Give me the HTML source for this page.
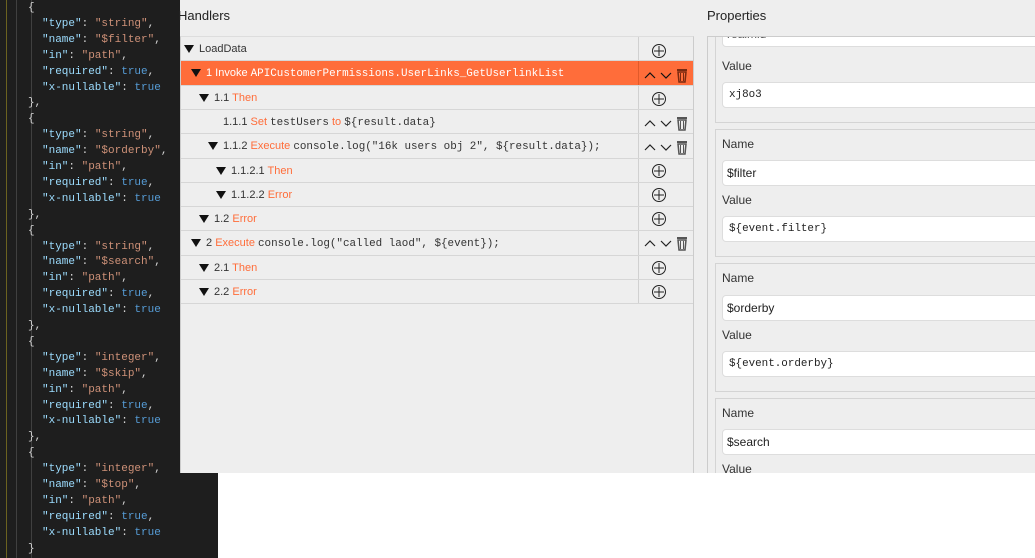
<!DOCTYPE html>
<html><head><style>
*{margin:0;padding:0;box-sizing:border-box}
body{width:1035px;height:558px;overflow:hidden;background:#fff;position:relative;font-family:"Liberation Sans",sans-serif}
#ed{position:absolute;left:0;top:0;width:218px;height:558px;background:#1e1e1e;font-family:"Liberation Mono",monospace;font-size:11px;color:#d4d4d4}
#ed .l{position:absolute;left:0;height:16px;line-height:16px;white-space:pre}
.k{color:#9cdcfe}.s{color:#ce9178}.b{color:#569cd6}
.g{position:absolute;top:0;bottom:0;width:1px;background:#404040}
#main{position:absolute;left:180px;top:0;width:855px;height:473px;background:#eeeeee}
.ttl{position:absolute;font-size:13px;color:#222}
#hd{position:absolute;left:0;top:36px;width:514px;height:437px;border-left:1px solid #ccc;border-right:1px solid #ccc;border-top:1px solid #ddd}
.row{position:absolute;left:0;width:512px;height:24px;border-bottom:1px solid #d6d6d6;font-size:11px;color:#333;line-height:24px;white-space:pre}
.row .act{position:absolute;left:457px;top:0;width:55px;height:100%;border-left:1px solid #d0d0d0}
.o{color:#ff6d3a}
.m{font-family:"Liberation Mono",monospace;font-size:10.9px}
.tri{display:inline-block;width:0;height:0;border-left:5px solid transparent;border-right:5px solid transparent;border-top:8px solid #111;margin-right:5px;vertical-align:-1px}
.sel{background:#ff6d3a;color:#fff}
.sel .tri{border-top-color:#111}
#pr{position:absolute;left:527px;top:36px;width:328px;height:437px;border-left:1px solid #ccc;border-top:1px solid #ccc;overflow:hidden}
.grp{position:absolute;left:7px;width:330px;border:1px solid #d4d4d4}
.lab{position:absolute;left:14px;font-size:12px;color:#333}
.inp{position:absolute;left:14px;width:330px;height:26px;background:#fff;border:1px solid #ddd;border-radius:4px;font-size:12px;line-height:24px;padding-left:4px;color:#222}
.inp.m{font-size:10.9px;padding-left:6px}
</style></head><body>
<div id="ed">
<div class="g" style="left:6px;background:#6b6220"></div>
<div class="g" style="left:16px"></div>
<div class="g" style="left:31px"></div>
<div id="code"></div>
</div>
<div id="main">
<div class="ttl" style="left:-2px;top:8px">Handlers</div>
<div class="ttl" style="left:527px;top:8px">Properties</div>
<div id="hd">
<div class="row" style="top:0;padding-left:3px"><span class="tri"></span>LoadData<div class="act"></div></div>
<div class="row sel" style="top:24px;height:25px;padding-left:10px"><span class="tri"></span>1 Invoke <span class="m">APICustomerPermissions.UserLinks_GetUserlinkList</span><div class="act" style="border-left-color:#e05a2a"></div></div>
<div class="row" style="top:49px;padding-left:18px"><span class="tri"></span>1.1 <span class="o">Then</span><div class="act"></div></div>
<div class="row" style="top:73px;padding-left:42px">1.1.1 <span class="o">Set</span> <span class="m">testUsers</span> <span class="o">to</span> <span class="m">${result.data}</span><div class="act"></div></div>
<div class="row" style="top:97px;height:25px;padding-left:27px"><span class="tri"></span>1.1.2 <span class="o">Execute</span> <span class="m">console.log("16k users obj 2", ${result.data});</span><div class="act"></div></div>
<div class="row" style="top:122px;padding-left:35px"><span class="tri"></span>1.1.2.1 <span class="o">Then</span><div class="act"></div></div>
<div class="row" style="top:146px;padding-left:35px"><span class="tri"></span>1.1.2.2 <span class="o">Error</span><div class="act"></div></div>
<div class="row" style="top:170px;padding-left:18px"><span class="tri"></span>1.2 <span class="o">Error</span><div class="act"></div></div>
<div class="row" style="top:194px;height:25px;padding-left:10px"><span class="tri"></span>2 <span class="o">Execute</span> <span class="m">console.log("called laod", ${event});</span><div class="act"></div></div>
<div class="row" style="top:219px;padding-left:18px"><span class="tri"></span>2.1 <span class="o">Then</span><div class="act"></div></div>
<div class="row" style="top:243px;padding-left:18px"><span class="tri"></span>2.2 <span class="o">Error</span><div class="act"></div></div>
<svg style="position:absolute;left:0;top:0" width="514" height="300" id="icons"></svg>
</div>
<div id="pr">
<div class="grp" style="top:-10px;height:96px"></div>
<div class="inp" style="top:-16px;color:#555">realmid</div>
<div class="lab" style="top:22px">Value</div>
<div class="inp m" style="top:45px">xj8o3</div>
<div class="grp" style="top:92px;height:128px"></div>
<div class="lab" style="top:100px">Name</div>
<div class="inp" style="top:123px">$filter</div>
<div class="lab" style="top:156px">Value</div>
<div class="inp m" style="top:179px">${event.filter}</div>
<div class="grp" style="top:226px;height:129px"></div>
<div class="lab" style="top:234px">Name</div>
<div class="inp" style="top:258px">$orderby</div>
<div class="lab" style="top:291px">Value</div>
<div class="inp m" style="top:314px">${event.orderby}</div>
<div class="grp" style="top:361px;height:90px"></div>
<div class="lab" style="top:369px">Name</div>
<div class="inp" style="top:392px">$search</div>
<div class="lab" style="top:425px">Value</div>
</div>
</div>
<script>
var L=[];
function obj(t,n,last){L.push([1,'{']);L.push([2,'<span class="k">"type"</span>: <span class="s">"'+t+'"</span>,']);L.push([2,'<span class="k">"name"</span>: <span class="s">"'+n+'"</span>,']);L.push([2,'<span class="k">"in"</span>: <span class="s">"path"</span>,']);L.push([2,'<span class="k">"required"</span>: <span class="b">true</span>,']);L.push([2,'<span class="k">"x-nullable"</span>: <span class="b">true</span>']);L.push([1,last?'}':'},']);}
obj('string','$filter');obj('string','$orderby');obj('string','$search');obj('integer','$skip');obj('integer','$top',1);
var h='';L.forEach(function(l,i){h+='<div class="l" style="top:'+(i*15.9)+'px;left:'+(l[0]==1?28:42)+'px">'+l[1]+'</div>';});
document.getElementById('code').innerHTML=h;
var s='';var cx=478;
function plus(y){s+='<circle cx="'+cx+'" cy="'+y+'" r="6.5" fill="none" stroke="#222" stroke-width="1"/><path d="M'+(cx-5)+' '+y+'H'+(cx+5)+'M'+cx+' '+(y-5)+'V'+(y+5)+'" stroke="#222"/>';}
function ctl(y,c,tc){s+='<path d="M464 '+(y+3)+'L469 '+(y-2)+'L474 '+(y+3)+'M480 '+(y-2)+'L485 '+(y+3)+'L490 '+(y-2)+'" fill="none" stroke="'+c+'" stroke-width="1.2"/>';s+='<rect x="496" y="'+(y-6)+'" width="10" height="2" fill="'+tc+'"/><path d="M497 '+(y-3)+'h8l-1 10h-6z" fill="none" stroke="'+tc+'" stroke-width="1.5"/><path d="M499.5 '+(y-2)+'v8M502.5 '+(y-2)+'v8" stroke="'+tc+'"/>';}
plus(14);ctl(38,'#111','#7a2a10');plus(62);ctl(86,'#222','#555');ctl(110,'#222','#555');plus(134);plus(158);plus(182);ctl(206,'#222','#555');plus(231);plus(255);
document.getElementById('icons').innerHTML=s;
</script>
</body></html>
